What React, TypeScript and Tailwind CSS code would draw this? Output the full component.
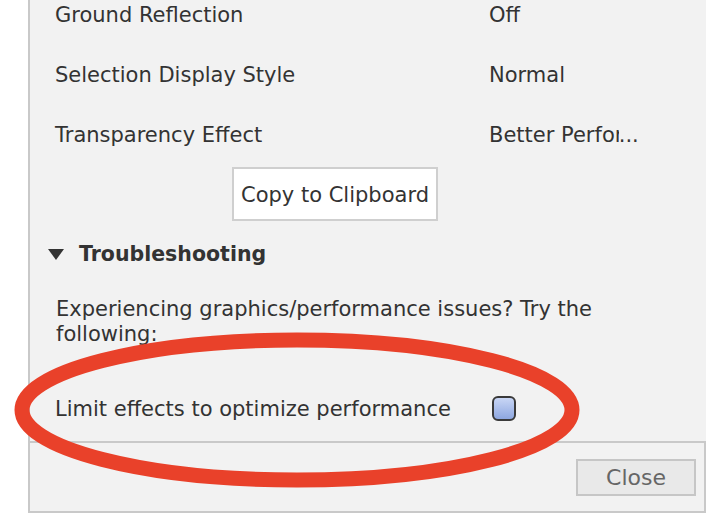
import React from 'react';

const rows = [
  { label: 'Ground Reflection', value: 'Off' },
  { label: 'Selection Display Style', value: 'Normal' },
  { label: 'Transparency Effect', value: 'Better Perfo' },
];

export default function App() {
  return (
    <div className="relative w-[706px] h-[530px] bg-white overflow-hidden text-[#333] font-['DejaVu_Sans',sans-serif] text-[21px]">
      {/* Settings panel */}
      <div className="flow-root ml-[28px] h-[441px] bg-[#f2f2f2] border-l-2 border-[#c9c9c9]">
        <div className="-mt-[14px]">
          {rows.map((row, i) => (
            <div key={row.label} className="h-[60px] flex items-center pl-[25px]">
              <span className="w-[434px]">{row.label}</span>
              {i === 2 ? (
                <span className="whitespace-nowrap">
                  {row.value}
                  <span className="inline-block w-[4px] overflow-hidden align-bottom">r</span>
                  ...
                </span>
              ) : (
                <span>{row.value}</span>
              )}
            </div>
          ))}
        </div>

        <button className="mt-[1px] ml-[202px] w-[206px] h-[54px] pt-[3px] bg-white border-2 border-[#cfcfcf] flex items-center justify-center">
          Copy to Clipboard
        </button>

        {/* Troubleshooting section */}
        <div className="mt-[22px] h-[22px] flex items-center pl-[18px] gap-[15px]">
          <svg width="16" height="11" viewBox="0 0 16 11">
            <path d="M0 0 H16 L8 11 Z" fill="#333" />
          </svg>
          <span className="font-bold text-[20.5px]">Troubleshooting</span>
        </div>

        <p className="mt-[32px] ml-[26px] leading-[25px]">
          Experiencing graphics/performance issues? Try the
          <br />
          following:
        </p>

        <div className="mt-[50px] h-[26px] flex items-center pl-[25px]">
          <span className="w-[437px]">Limit effects to optimize performance</span>
          <div className="-mt-[3px] w-[24px] h-[25px] rounded-[6px] border-2 border-[#3a3a3a] bg-gradient-to-b from-[#c9d6f5] to-[#8ea7e0]" />
        </div>
      </div>

      {/* Footer */}
      <div className="ml-[28px] h-[72px] bg-[#f2f2f2] border-2 border-[#c9c9c9] flex items-center justify-end pr-[8px]">
        <button className="w-[120px] h-[37px] pt-[1px] bg-[#e9e9e9] border-2 border-[#c6c6c6] text-[#666] text-[22px] flex items-center justify-center">
          Close
        </button>
      </div>

      {/* Annotation */}
      <svg className="absolute left-0 top-0 pointer-events-none" width="706" height="530">
        <ellipse cx="297" cy="410" rx="275" ry="70" fill="none" stroke="#e9412a" strokeWidth="15" />
      </svg>
    </div>
  );
}
